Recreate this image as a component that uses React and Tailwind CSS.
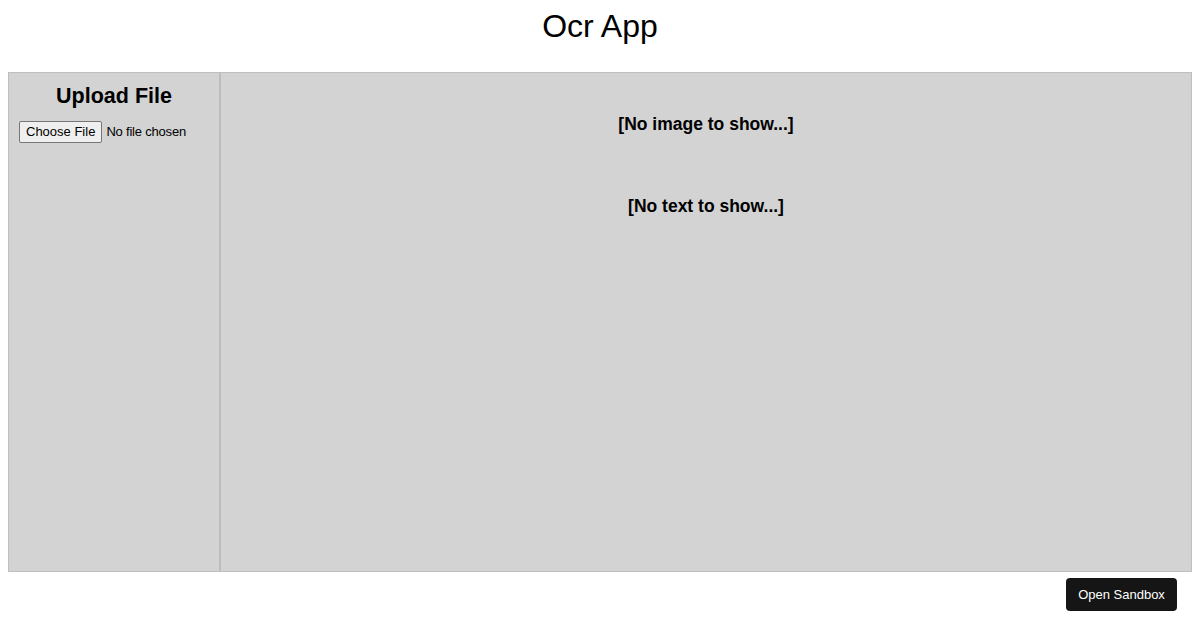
export default function App() {
  return (
    <div className="min-h-[630px] bg-white text-black" style={{ fontFamily: '"Liberation Sans", Arial, sans-serif' }}>
      <h1 className="pt-2 text-center text-[32px] leading-[37px] font-normal">Ocr App</h1>
      <div className="mx-2 mt-[27px] flex h-[500px] border border-[#bfbfbf] bg-[#d3d3d3]">
        <div className="flex w-[212px] shrink-0 flex-col border-r-2 border-[#bdbdbd] px-[10px] pt-[11px]">
          <h2 className="text-center text-[21.5px] font-bold leading-[24px]">Upload File</h2>
          <div className="mt-[13px] flex items-center text-[13px]">
            <button className="h-[22px] rounded-[2px] border border-[#767676] bg-[#efefef] px-[6px] leading-[20px] text-black">
              Choose File
            </button>
            <span className="ml-[4px] tracking-[-0.2px]">No file chosen</span>
          </div>
        </div>
        <div className="flex flex-1 flex-col items-center pt-[41px]">
          <h3 className="text-[17.5px] font-bold leading-[20px]">[No image to show...]</h3>
          <h3 className="mt-[62px] text-[17.5px] font-bold leading-[20px]">[No text to show...]</h3>
        </div>
      </div>
      <button className="fixed right-[23px] top-[578px] flex h-[33px] w-[111px] items-center justify-center rounded-[4px] bg-[#151515] text-[13px] text-white">
        Open Sandbox
      </button>
    </div>
  );
}
